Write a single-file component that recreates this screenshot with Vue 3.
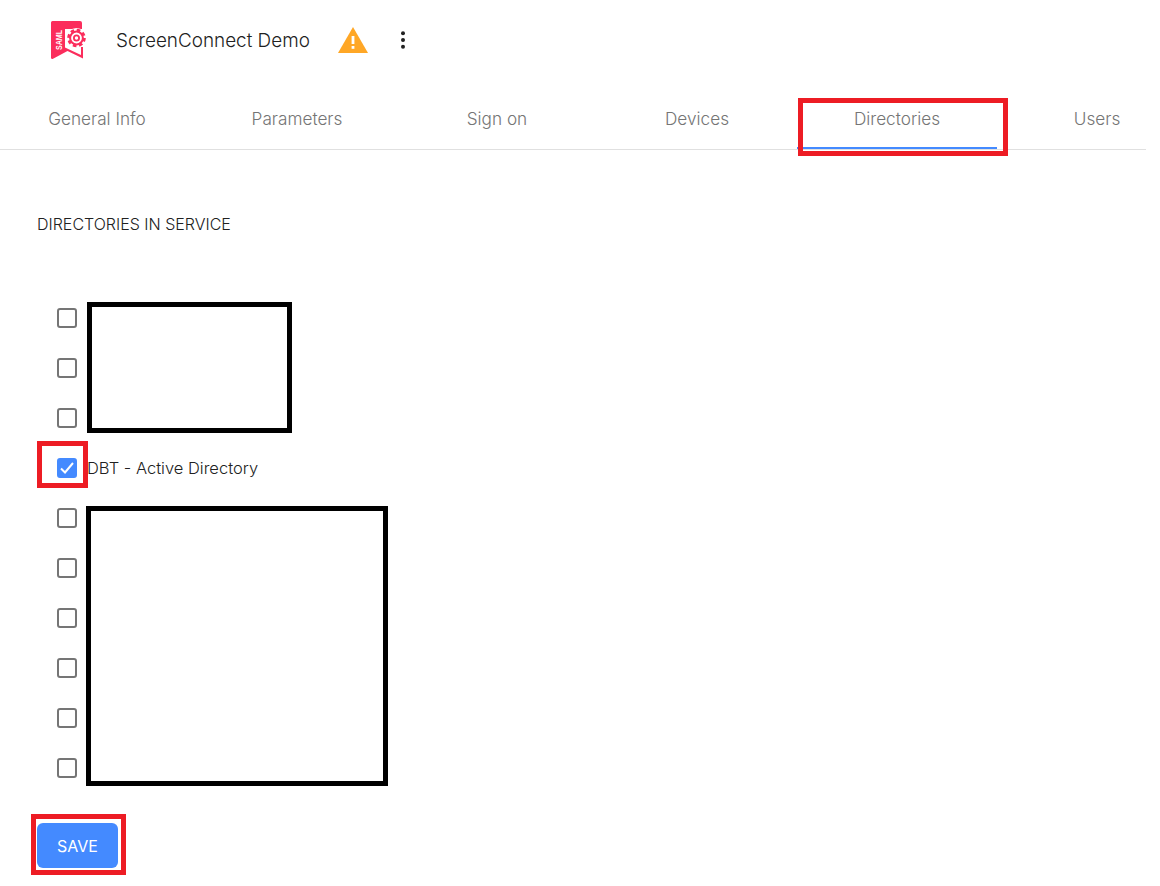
<script setup>
const tabs = [
  { label: 'General Info' },
  { label: 'Parameters' },
  { label: 'Sign on' },
  { label: 'Devices' },
  { label: 'Directories', active: true },
  { label: 'Users' }
]
const rows = [
  { checked: false }, { checked: false }, { checked: false },
  { checked: true, label: 'DBT - Active Directory' },
  { checked: false }, { checked: false }, { checked: false },
  { checked: false }, { checked: false }, { checked: false }
]
</script>

<template>
  <div class="page">
    <header class="head">
      <svg class="logo" width="38" height="40" viewBox="0 0 38 40" aria-hidden="true">
        <path d="M2.5 1H30a2 2 0 0 1 2 2v6H15v18.5L31 35V27h2v11.4L17.5 31 2.6 39a1.4 1.4 0 0 1-1.6-1.3V2.5A1.5 1.5 0 0 1 2.5 1z" fill="#fb2d5c"/>
        <text class="saml" transform="translate(11.5 30) rotate(-90)" textLength="20" lengthAdjust="spacingAndGlyphs">SAML</text>
        <g transform="translate(26.5 18)" fill="none">
          <circle r="10" fill="#fff"/>
          <circle r="7.6" stroke="#fb2d5c" stroke-width="3.4" stroke-dasharray="3.4 2.57"/>
          <circle r="6.4" stroke="#fb2d5c" stroke-width="2"/>
          <circle r="2.6" stroke="#fb2d5c" stroke-width="1.8"/>
        </g>
      </svg>
      <span class="title">ScreenConnect Demo</span>
      <svg class="warn" width="32" height="28" viewBox="0 0 32 28" aria-hidden="true">
        <path d="M16 1 31 27H1z" fill="#ffa726"/>
        <rect x="14.6" y="10" width="2.8" height="8" fill="#fff"/>
        <rect x="14.6" y="20" width="2.8" height="2.8" fill="#fff"/>
      </svg>
      <svg class="more" width="6" height="18" viewBox="0 0 6 18" aria-hidden="true">
        <circle cx="3" cy="2.2" r="2" fill="#212121"/>
        <circle cx="3" cy="9" r="2" fill="#212121"/>
        <circle cx="3" cy="15.8" r="2" fill="#212121"/>
      </svg>
    </header>

    <nav class="tabs">
      <div v-for="t in tabs" :key="t.label" class="tab" :class="{ active: t.active }">{{ t.label }}</div>
      <i class="mark red-tab"></i>
    </nav>

    <h2 class="section">DIRECTORIES IN SERVICE</h2>

    <div class="list">
      <div v-for="(r, i) in rows" :key="i" class="row">
        <span class="box" :class="{ on: r.checked }">
          <svg v-if="r.checked" width="16" height="14" viewBox="0 0 16 14" aria-hidden="true">
            <path d="M2 7.5 6 11.5l8-9.5" fill="none" stroke="#fff" stroke-width="2"/>
          </svg>
        </span>
        <span v-if="r.label" class="label">{{ r.label }}</span>
      </div>
      <i class="mark black one"></i>
      <i class="mark black two"></i>
      <i class="mark red-check"></i>
    </div>

    <div class="actions">
      <button class="save" type="button">SAVE</button>
      <i class="mark red-save"></i>
    </div>
  </div>
</template>

<style>
html, body { background: #fff; }
</style>

<style scoped>
.page {
  width: 1146px;
  height: 886px;
  overflow: hidden;
  font-family: Inter, "Open Sans", sans-serif;
  color: #212121;
}
.head {
  display: flex;
  align-items: center;
  height: 89px;
  padding: 0 0 9px 50px;
  box-sizing: border-box;
}
.logo { flex: none; margin-right: 28px; }
.saml {
  font: 700 9.5px "Liberation Sans", sans-serif;
  fill: #fff;
}
.title { font-size: 18.9px; font-weight: 300; width: 222px; white-space: nowrap; }
.warn { flex: none; margin-right: 31px; margin-left: -1px; }
.more { flex: none; }
.tabs {
  position: relative;
  display: flex;
  height: 61px;
  box-sizing: border-box;
  border-bottom: 1px solid #e0e0e0;
  margin-left: -3px;
}
.tab {
  flex: none;
  width: 200px;
  height: 60px;
  box-sizing: border-box;
  padding-top: 19px;
  text-align: center;
  font-size: 17.2px;
  font-weight: 300;
  line-height: 22px;
  color: #757575;
}
.tab.active { border-bottom: 2px solid #448aff; }
.section {
  margin: 62px 0 0 37px;
  font-size: 16px;
  font-weight: 300;
  line-height: 24px;
  color: #212121;
}
.list {
  position: relative;
  margin: 57px 0 0;
}
.row {
  display: flex;
  align-items: center;
  height: 50px;
  padding-left: 57px;
}
.box {
  flex: none;
  width: 20px;
  height: 20px;
  box-sizing: border-box;
  border: 2px solid #757575;
  border-radius: 3px;
  display: flex;
  align-items: center;
  justify-content: center;
}
.box.on { background: #448aff; border-color: #448aff; }
.label { margin-left: 10px; font-size: 16.5px; font-weight: 300; white-space: nowrap; }
.actions { position: relative; margin: 30px 0 0 37px; }
.save {
  display: block;
  width: 81px;
  height: 45px;
  border: 0;
  border-radius: 6px;
  background: #448aff;
  color: #fff;
  font: 400 16px Inter, sans-serif;
}
.mark { position: absolute; display: block; box-sizing: border-box; border: 5px solid; pointer-events: none; }
.black { border-color: #000; }
.one { left: 87px; top: 9px; width: 205px; height: 131px; }
.two { left: 86px; top: 213px; width: 302px; height: 280px; }
.red-tab { border-color: #ed1c24; left: 801px; top: 9px; width: 210px; height: 58px; }
.red-check { border-color: #ed1c24; left: 37px; top: 148px; width: 51px; height: 47px; }
.red-save { border-color: #ed1c24; left: -6px; top: -9px; width: 95px; height: 61px; }
</style>
